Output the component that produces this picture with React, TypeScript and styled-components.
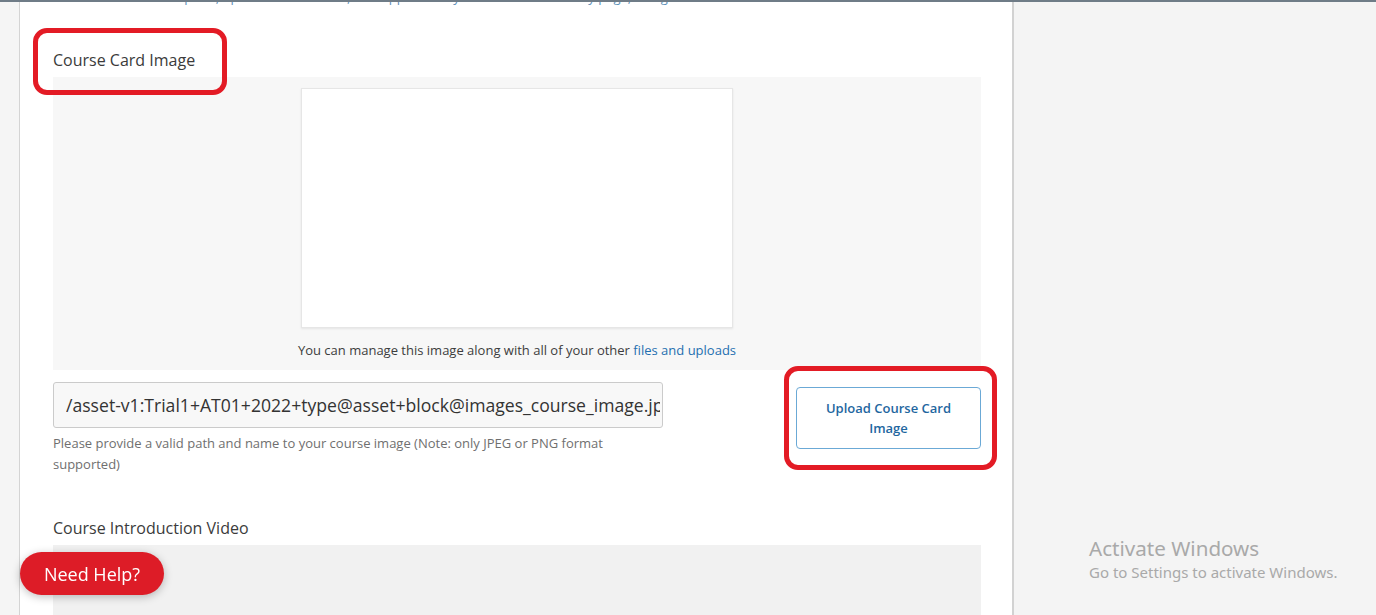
import React from 'react';
import styled, { createGlobalStyle } from 'styled-components';

const GlobalStyle = createGlobalStyle`
    html,
    body {
        margin: 0;
        padding: 0;
        background: #f3f3f3;
        font-family: 'Open Sans', 'Liberation Sans', sans-serif;
    }
`;

const Page = styled.div`
    display: grid;
    grid-template-columns: 20px 994px 1fr;
    height: 615px;
    overflow: hidden;
    border-top: 2px solid #6f7c87;
    box-sizing: border-box;
`;

const Gutter = styled.div`
    background: #f5f5f5;
    border-right: 1px solid #d4d4d4;
`;

const Main = styled.main`
    background: #ffffff;
    border-right: 2px solid #d2d2d2;
    padding: 0 31px 0 33px;
`;

const Side = styled.aside`
    background: #f4f4f4;
    position: relative;
`;

const ClippedLine = styled.div`
    height: 4px;
    overflow: hidden;
    padding-left: 48px;

    span {
        display: block;
        margin-top: -14px;
        font-size: 13px;
        line-height: 18px;
        color: #5d8fb8;
        white-space: nowrap;
    }
`;

const Heading = styled.h3<{ $top: number }>`
    position: relative;
    margin: ${p => p.$top}px 0 5px;
    font-size: 16px;
    line-height: 24px;
    font-weight: 500;
    color: #3b3b3b;
`;

const Highlight = styled.span<{ $l: number; $t: number; $w: number; $h: number }>`
    position: absolute;
    left: ${p => p.$l}px;
    top: ${p => p.$t}px;
    width: ${p => p.$w}px;
    height: ${p => p.$h}px;
    border: 5px solid #e31b25;
    border-radius: 14px;
    box-sizing: border-box;
    pointer-events: none;
`;

const ImageArea = styled.div`
    background: #f7f7f7;
    padding: 11px 0 10px;
    display: flex;
    flex-direction: column;
    align-items: center;
`;

const Preview = styled.div`
    width: 432px;
    height: 240px;
    background: #ffffff;
    border: 1px solid #e6e6e6;
    box-shadow: 0 1px 2px rgba(0, 0, 0, 0.08);
    box-sizing: border-box;
`;

const Caption = styled.p`
    margin: 12px 0 0;
    font-size: 13px;
    line-height: 20px;
    color: #3d3d3d;

    a {
        color: #1f6fb0;
        text-decoration: none;
    }
`;

const FieldRow = styled.div`
    display: flex;
    justify-content: space-between;
    align-items: flex-start;
    margin-top: 12px;
`;

const Field = styled.div`
    width: 610px;
`;

const PathInput = styled.input`
    width: 100%;
    height: 46px;
    box-sizing: border-box;
    padding: 0 2px 0 12px;
    border: 1px solid #cbcbcb;
    border-radius: 3px;
    background: #f8f8f8;
    font-family: 'Open Sans', 'Liberation Sans', sans-serif;
    font-size: 17.6px;
    color: #333333;
    outline: none;
`;

const Help = styled.p`
    margin: 5px 0 0;
    font-size: 13px;
    line-height: 21px;
    color: #6f6f6f;
`;

const UploadWrap = styled.div`
    position: relative;
    margin-top: 5px;
`;

const UploadButton = styled.button`
    width: 185px;
    height: 62px;
    background: #ffffff;
    border: 1px solid #6ba9d6;
    border-radius: 4px;
    font-family: 'Open Sans', 'Liberation Sans', sans-serif;
    font-size: 13px;
    line-height: 20px;
    font-weight: 600;
    color: #1f679f;
    padding: 0 22px;
    cursor: pointer;
`;

const VideoArea = styled.div`
    background: #f1f1f1;
    height: 100px;
`;

const NeedHelp = styled.button`
    position: fixed;
    left: 20px;
    top: 552px;
    width: 144px;
    height: 43px;
    border: none;
    border-radius: 22px;
    background: #dd1c27;
    color: #ffffff;
    font-family: 'Open Sans', 'Liberation Sans', sans-serif;
    font-size: 18px;
    box-shadow: 0 2px 8px rgba(0, 0, 0, 0.25);
    cursor: pointer;
`;

const Watermark = styled.div`
    position: absolute;
    left: 75px;
    top: 533px;
    font-family: 'Noto Sans', 'Open Sans', sans-serif;
    color: #a9a9a9;

    strong {
        display: block;
        font-weight: 400;
        font-size: 20.6px;
        line-height: 26px;
    }

    span {
        display: block;
        font-size: 15px;
        line-height: 22px;
    }
`;

const App: React.FC = () => {
    return (
        <>
            <GlobalStyle />
            <Page>
                <Gutter />
                <Main>
                    <ClippedLine>
                        <span>
                            A short description, up to 150 characters, that appears on your course's summary page, along with a
                        </span>
                    </ClippedLine>
                    <Heading $top={42}>
                        Course Card Image
                        <Highlight $l={-20} $t={-20} $w={194} $h={67} />
                    </Heading>
                    <ImageArea>
                        <Preview />
                        <Caption>
                            You can manage this image along with all of your other <a href="#">files and uploads</a>
                        </Caption>
                    </ImageArea>
                    <FieldRow>
                        <Field>
                            <PathInput
                                readOnly
                                value="/asset-v1:Trial1+AT01+2022+type@asset+block@images_course_image.jpg"
                            />
                            <Help>
                                Please provide a valid path and name to your course image (Note: only JPEG or PNG format
                                supported)
                            </Help>
                        </Field>
                        <UploadWrap>
                            <UploadButton>Upload Course Card Image</UploadButton>
                            <Highlight $l={-12} $t={-21} $w={213} $h={104} />
                        </UploadWrap>
                    </FieldRow>
                    <Heading $top={41}>Course Introduction Video</Heading>
                    <VideoArea />
                </Main>
                <Side>
                    <Watermark>
                        <strong>Activate Windows</strong>
                        <span>Go to Settings to activate Windows.</span>
                    </Watermark>
                </Side>
            </Page>
            <NeedHelp>Need Help?</NeedHelp>
        </>
    );
};

export default App;
